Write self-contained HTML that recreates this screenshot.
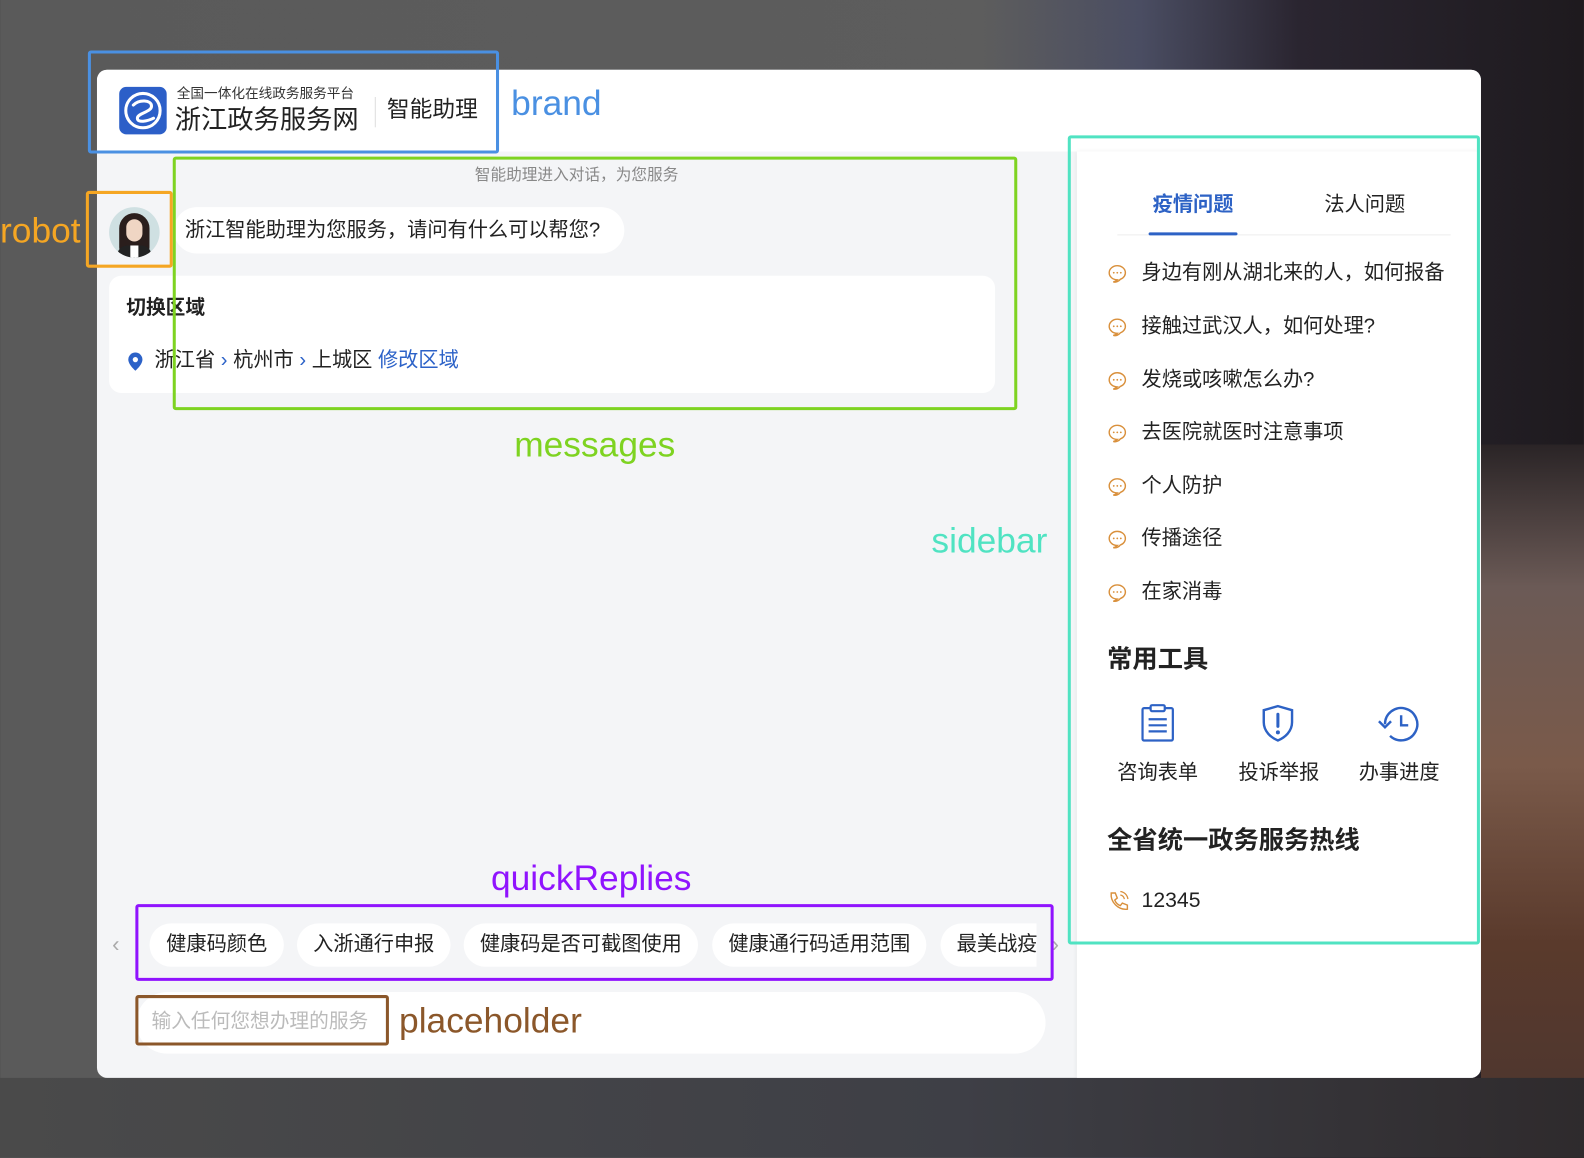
<!DOCTYPE html>
<html><head><meta charset="utf-8"><style>
*{margin:0;padding:0;box-sizing:border-box}
body{width:1584px;height:1146px;overflow:hidden;position:relative;font-family:"Liberation Sans","Noto Sans CJK SC",sans-serif;
background:linear-gradient(90deg,#5a5a5a 0%,#5d5d5d 62%,#4a4d62 72%,#2a2530 82%,#1e1a1e 100%);}
#w{position:absolute;left:0;top:0;width:1584px;height:1146px;transform:scale(1.0102);transform-origin:0 0}
.a{position:absolute}
.bg2{left:1466px;top:440px;width:118px;height:706px;background:linear-gradient(180deg,#2a2426 0%,#6b5a56 20%,#7a5a4a 45%,#5a3a2c 70%,#4a3530 100%)}
.bg3{left:0;top:1067px;width:1584px;height:79px;background:linear-gradient(90deg,#4a4a4a,#3e3f46 60%,#2e2a2c)}
.panel{left:96px;top:69px;width:1370px;height:998px;background:#f4f5f7;border-radius:10px;overflow:hidden}
.hdr{left:0;top:0;width:1370px;height:81px;background:#fff}
.side{left:970px;top:81px;width:400px;height:917px;background:#fff;box-shadow:-1px 0 4px rgba(0,0,0,.06)}
.box{position:absolute;border:3px solid;border-radius:3px}
.lbl{position:absolute;font-size:35px;line-height:35px;font-family:"Liberation Sans","DejaVu Sans",sans-serif}
.t{position:absolute;white-space:nowrap;line-height:1}
.chip{position:absolute;top:914px;height:43px;background:#fff;border-radius:22px;font-size:20px;line-height:43px;color:#222;text-align:center;white-space:nowrap;overflow:hidden}
.q{position:absolute;left:1130px;font-size:20px;color:#222;line-height:1;white-space:nowrap}
.ic{position:absolute;left:1097px}
</style></head><body><div id="w">
<div class="a bg2"></div><div class="a bg3"></div>
<div class="a panel">
 <div class="a hdr"></div>
 <div class="a side"></div>
</div>
<div class="a" style="left:118px;top:86px;width:47px;height:47px;background:#2c5fc8;border-radius:7px"></div>
<svg class="a" style="left:118px;top:86px" width="47" height="47" viewBox="0 0 47 47"><circle cx="23.5" cy="23.5" r="17" fill="none" stroke="#fff" stroke-width="3"/><path d="M14 18c6-6 18-5 18 1s-14 7-14 12 10 3 16 0" fill="none" stroke="#fff" stroke-width="3" stroke-linecap="round"/></svg>
<div class="t" style="left:175px;top:86px;font-size:13.5px;color:#333">全国一体化在线政务服务平台</div>
<div class="t" style="left:173px;top:105px;font-size:26px;color:#222">浙江政务服务网</div>
<div class="a" style="left:371px;top:96px;width:1px;height:30px;background:#ddd"></div>
<div class="t" style="left:383px;top:98px;font-size:22.5px;color:#222">智能助理</div>
<div class="t" style="left:470px;top:166px;font-size:15.5px;color:#888">智能助理进入对话，为您服务</div>
<div class="a" style="left:108px;top:205px;width:50px;height:50px;border-radius:50%;overflow:hidden;background:#cfe0e2">
 <div class="a" style="left:10px;top:6px;width:30px;height:40px;border-radius:15px 15px 6px 6px;background:#2a1e1c"></div>
 <div class="a" style="left:17px;top:12px;width:16px;height:22px;border-radius:8px;background:#f0d6c4"></div>
 <div class="a" style="left:8px;top:38px;width:34px;height:16px;border-radius:10px 10px 0 0;background:#222"></div>
 <div class="a" style="left:21px;top:38px;width:8px;height:12px;background:#fff"></div>
</div>
<div class="a" style="left:172px;top:205px;width:446px;height:46px;background:#fff;border-radius:23px"></div>
<div class="t" style="left:183px;top:218px;font-size:20px;color:#222">浙江智能助理为您服务，请问有什么可以帮您?</div>
<div class="a" style="left:108px;top:273px;width:877px;height:116px;background:#fff;border-radius:12px"></div>
<div class="t" style="left:125px;top:296px;font-size:19.5px;font-weight:bold;color:#222">切换区域</div>
<svg class="a" style="left:126px;top:348px" width="16" height="20" viewBox="0 0 16 20"><path d="M8 1a7 7 0 0 0-7 7c0 5 7 11 7 11s7-6 7-11a7 7 0 0 0-7-7z" fill="#2c62c8"/><circle cx="8" cy="8" r="2.6" fill="#fff"/></svg>
<div class="t" style="left:153px;top:347px;font-size:20px;color:#222">浙江省 <span style="color:#2c62c8">›</span> 杭州市 <span style="color:#2c62c8">›</span> 上城区 <span style="color:#2c62c8">修改区域</span></div>
<div class="t" style="left:1141px;top:193px;font-size:20px;color:#2d62c5;font-weight:bold">疫情问题</div>
<div class="t" style="left:1311px;top:193px;font-size:20px;color:#222">法人问题</div>
<div class="a" style="left:1106px;top:232px;width:330px;height:1px;background:#eee"></div>
<div class="a" style="left:1137px;top:230px;width:88px;height:3px;background:#2d62c5;border-radius:2px"></div>
<svg width="0" height="0" style="position:absolute"><defs><g id="b"><path d="M9 2a8 7 0 1 0 0 14c0 0-2 2-4 2 3 1 6-1 7-2.5A8 7 0 0 0 9 2z" fill="none" stroke="#d9903c" stroke-width="1.4"/><circle cx="5.5" cy="9" r=".9" fill="#d9903c"/><circle cx="9" cy="9" r=".9" fill="#d9903c"/><circle cx="12.5" cy="9" r=".9" fill="#d9903c"/></g></defs></svg>
<svg class="ic" style="top:261px" width="20" height="20"><use href="#b"/></svg><div class="q" style="top:260px">身边有刚从湖北来的人，如何报备</div>
<svg class="ic" style="top:314px" width="20" height="20"><use href="#b"/></svg><div class="q" style="top:313px">接触过武汉人，如何处理?</div>
<svg class="ic" style="top:367px" width="20" height="20"><use href="#b"/></svg><div class="q" style="top:366px">发烧或咳嗽怎么办?</div>
<svg class="ic" style="top:419px" width="20" height="20"><use href="#b"/></svg><div class="q" style="top:418px">去医院就医时注意事项</div>
<svg class="ic" style="top:472px" width="20" height="20"><use href="#b"/></svg><div class="q" style="top:471px">个人防护</div>
<svg class="ic" style="top:524px" width="20" height="20"><use href="#b"/></svg><div class="q" style="top:523px">传播途径</div>
<svg class="ic" style="top:577px" width="20" height="20"><use href="#b"/></svg><div class="q" style="top:576px">在家消毒</div>
<div class="t" style="left:1096px;top:641px;font-size:25px;font-weight:bold;color:#222">常用工具</div>
<svg class="a" style="left:1128px;top:697px" width="36" height="38" viewBox="0 0 36 38"><rect x="3" y="4" width="30" height="32" rx="1.5" fill="none" stroke="#2d62c5" stroke-width="2.2"/><rect x="11" y="1" width="14" height="6" rx="1.5" fill="#fff" stroke="#2d62c5" stroke-width="2.2"/><path d="M9 15h18M9 21h18M9 27h18" stroke="#2d62c5" stroke-width="2.2"/></svg>
<svg class="a" style="left:1248px;top:697px" width="34" height="38" viewBox="0 0 34 38"><path d="M17 2l14 4v12c0 9-7 15-14 18C10 33 3 27 3 18V6z" fill="none" stroke="#2d62c5" stroke-width="2.4"/><path d="M17 10v12" stroke="#2d62c5" stroke-width="3" stroke-linecap="round"/><circle cx="17" cy="28" r="2" fill="#2d62c5"/></svg>
<svg class="a" style="left:1362px;top:697px" width="44" height="40" viewBox="0 0 44 40"><path d="M9 20a16 16 0 1 1 5 11.5" fill="none" stroke="#2d62c5" stroke-width="2.4"/><path d="M3 17l6 6 6-6" fill="none" stroke="#2d62c5" stroke-width="2.4"/><path d="M25 11v10h7" fill="none" stroke="#2d62c5" stroke-width="2.4"/></svg>
<div class="t" style="left:1106px;top:755px;font-size:20px;color:#222">咨询表单</div>
<div class="t" style="left:1226px;top:755px;font-size:20px;color:#222">投诉举报</div>
<div class="t" style="left:1345px;top:755px;font-size:20px;color:#222">办事进度</div>
<div class="t" style="left:1096px;top:820px;font-size:25px;font-weight:bold;color:#222">全省统一政务服务热线</div>
<svg class="a" style="left:1096px;top:881px" width="22" height="22" viewBox="0 0 22 22"><path d="M4 3l4 0 2 5-2.5 2c1 2.5 3 4.5 5.5 5.5L15 13l5 2v4c-9 1-17-7-16-16z" fill="none" stroke="#d9903c" stroke-width="1.4"/><path d="M13 5a5 5 0 0 1 4 4M13 1.5a8.5 8.5 0 0 1 7.5 7.5" fill="none" stroke="#d9903c" stroke-width="1.3"/></svg>
<div class="t" style="left:1130px;top:881px;font-size:21px;color:#222">12345</div>
<div class="t" style="left:111px;top:924px;font-size:22px;color:#aaa">‹</div>
<div class="t" style="left:1041px;top:924px;font-size:22px;color:#aaa">›</div>
<div class="chip" style="left:148px;width:133px">健康码颜色</div>
<div class="chip" style="left:294px;width:152px">入浙通行申报</div>
<div class="chip" style="left:459px;width:232px">健康码是否可截图使用</div>
<div class="chip" style="left:705px;width:212px">健康通行码适用范围</div>
<div class="chip" style="left:931px;width:95px;border-radius:22px 0 0 22px;padding-left:16px;text-align:left">最美战疫</div>
<div class="a" style="left:135px;top:982px;width:900px;height:61px;background:#fff;border-radius:31px"></div>
<div class="t" style="left:150px;top:1002px;font-size:19.5px;color:#bbb">输入任何您想办理的服务</div>
<div class="box" style="left:87px;top:50px;width:407px;height:102px;border-color:#4a90e2"></div>
<div class="lbl" style="left:506px;top:85px;color:#4a90e2">brand</div>
<div class="box" style="left:171px;top:155px;width:836px;height:251px;border-color:#7ed321"></div>
<div class="lbl" style="left:509px;top:423px;color:#7ed321">messages</div>
<div class="box" style="left:85px;top:189px;width:86px;height:76px;border-color:#f5a623"></div>
<div class="lbl" style="left:0;top:211px;color:#f5a623">robot</div>
<div class="box" style="left:1057px;top:134px;width:408px;height:801px;border-color:#50e3c2"></div>
<div class="lbl" style="left:922px;top:518px;color:#50e3c2">sidebar</div>
<div class="box" style="left:134px;top:895px;width:909px;height:76px;border-color:#9013fe"></div>
<div class="lbl" style="left:486px;top:852px;color:#9013fe">quickReplies</div>
<div class="box" style="left:134px;top:985px;width:251px;height:50px;border-color:#8b572a"></div>
<div class="lbl" style="left:395px;top:993px;color:#8b572a">placeholder</div>
</div></body></html>
